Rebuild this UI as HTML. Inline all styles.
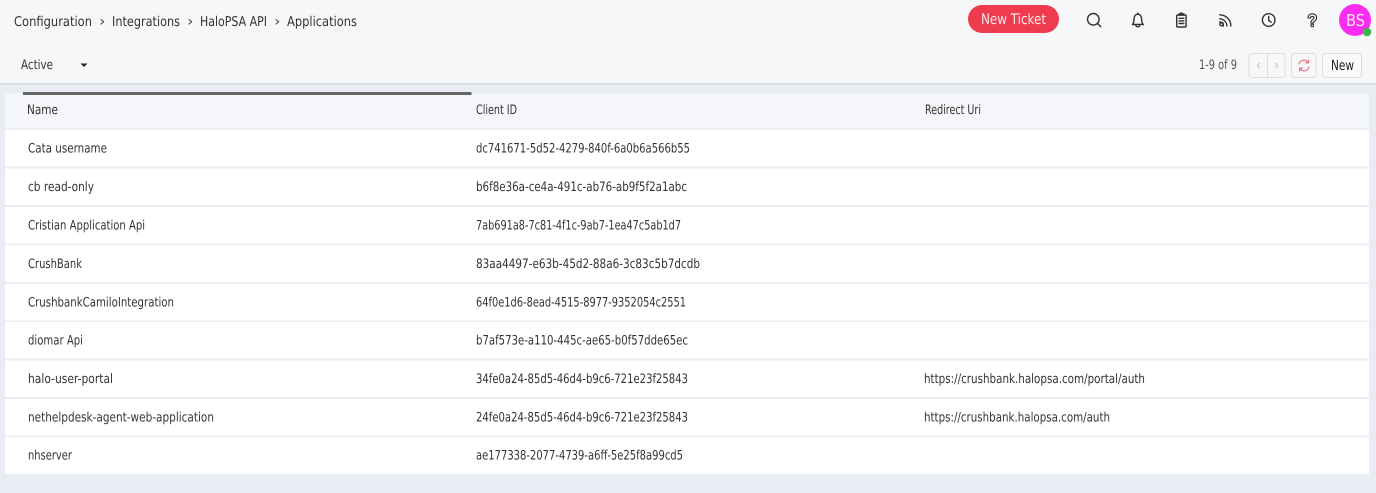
<!DOCTYPE html>
<html><head><meta charset="utf-8"><style>
html,body{margin:0;padding:0;width:1376px;height:493px;overflow:hidden;background:#e9ecf2}
svg{display:block}
text{font-family:"DejaVu Sans",sans-serif;font-size:13px;fill:#333;text-rendering:geometricPrecision}
.h{font-size:13.5px;fill:#333}
.i{fill:none;stroke:#333;stroke-width:1.4;stroke-linecap:round;stroke-linejoin:round}
.c{fill:none;stroke:#444;stroke-width:1;stroke-linecap:round;stroke-linejoin:round}
</style></head><body>
<svg width="1376" height="493" viewBox="0 0 1376 493" xmlns="http://www.w3.org/2000/svg">
<rect width="1376" height="493" fill="#e9ecf2"/>
<rect width="1376" height="84" fill="#f6f7f9"/>
<rect y="42" width="1376" height="1" fill="#f0f1f4"/>
<rect y="83" width="1376" height="2" fill="#dde1e7"/>

<text class="h" x="14" y="26" textLength="78" lengthAdjust="spacingAndGlyphs">Configuration</text>
<path class="c" d="M100.800 19.500l3 2.300-3 2.300"/>
<text class="h" x="112" y="26" textLength="68" lengthAdjust="spacingAndGlyphs">Integrations</text>
<path class="c" d="M188.800 19.500l3 2.300-3 2.300"/>
<text class="h" x="200" y="26" textLength="67" lengthAdjust="spacingAndGlyphs">HaloPSA API</text>
<path class="c" d="M275.800 19.500l3 2.300-3 2.300"/>
<text class="h" x="287" y="26" textLength="70" lengthAdjust="spacingAndGlyphs">Applications</text>

<rect x="968" y="5" width="91" height="28" rx="14" fill="#ee3b4d"/>
<text x="981" y="24" textLength="65" lengthAdjust="spacingAndGlyphs" style="font-size:14.500px;fill:#fbe9ea">New Ticket</text>

<g class="i">
<circle cx="1093.300" cy="19.300" r="5.800"/><path d="M1097.500 23.500l3.300 3.300"/>
<path d="M1132.300 24.500c1.500-1.300 1.700-2.800 1.700-5.500 0-2.800 1.700-4.800 3.800-4.800s3.800 2 3.800 4.800c0 2.700.2 4.200 1.700 5.500z"/><path d="M1135.800 24.800c0 2.800 4 2.800 4 0"/><path d="M1137.800 14v-.8"/>
<rect x="1176.700" y="15" width="9.400" height="12" rx="1"/><path d="M1179 15v-1h1.500v-.8h1.800v.8h1.500v1z" fill="#333"/><path d="M1179 18.300h4.800M1179 20.900h4.800M1179 23.500h4.800"/>
<path d="M1219.700 18.800c3.900 0 7.200 3.300 7.200 7.200M1219.700 14.800c6.200 0 11.200 5 11.200 11.200M1219.700 22c2 0 3.700 1.900 3.700 4" stroke-width="1.400"/>
<circle cx="1221.600" cy="24.200" r="1.700"/>
<circle cx="1268.700" cy="20" r="6.300"/><path d="M1268.700 16.400v4.100l2.500 1.600"/>
<path d="M1308 18c0-2.700 1.900-4.200 4.300-4.200s4.300 1.500 4.300 3.900c0 2.100-1.300 3-2.400 3.800-.6.400-.7.800-.7 1.500h-2.600c0-1.700.4-2.500 1.500-3.300.9-.7 1.700-1.100 1.700-2 0-.8-.8-1.300-1.800-1.300s-1.700.6-1.700 1.600z" stroke-width="1.100"/><rect x="1310.900" y="24.200" width="2.600" height="2.500" rx="1" stroke-width="1.100"/>
</g>

<circle cx="1355" cy="20" r="16" fill="#f92cf0"/>
<text x="1346" y="26" textLength="19" lengthAdjust="spacingAndGlyphs" style="font-size:16.500px;fill:#fde6fb">BS</text>
<circle cx="1367" cy="32" r="4.300" fill="#3cb54a"/>

<text x="21" y="69" textLength="32" lengthAdjust="spacingAndGlyphs">Active</text>
<path d="M80.500 63.500h7l-3.500 3.500z" fill="#222"/>

<text x="1199" y="69" textLength="38" lengthAdjust="spacingAndGlyphs" style="fill:#555">1-9 of 9</text>
<rect x="1249" y="53.500" width="36" height="24" rx="3" fill="#f6f7f9" stroke="#dcdee1"/>
<path d="M1267.500 54v23" stroke="#dcdee1"/>
<path d="M1259.500 63l-2 2.500 2 2.500M1275.500 63l2 2.500-2 2.500" fill="none" stroke="#b5b7ba"/>
<rect x="1291.500" y="53.500" width="24.500" height="24" rx="3" fill="#f6f7f9" stroke="#dcdee1"/>
<g fill="none" stroke="#ef6a78" stroke-width="1.100" stroke-linecap="round" stroke-linejoin="round">
<path d="M1299 64c.5-2.300 2.500-3.800 4.800-3.800 1.600 0 3 .8 3.900 2M1308.500 60v2.800h-2.800"/>
<path d="M1309 67c-.5 2.300-2.500 3.800-4.800 3.800-1.600 0-3-.8-3.900-2M1299.500 71v-2.800h2.800"/>
</g>
<rect x="1322.500" y="53.500" width="39" height="24" rx="3" fill="#f9fafb" stroke="#dcdee1"/>
<text x="1331" y="70" textLength="23" lengthAdjust="spacingAndGlyphs" style="font-size:14px;fill:#222">New</text>

<rect x="5" y="93" width="1364" height="35" fill="#f5f6f9"/>
<rect x="23" y="92" width="448.500" height="3" fill="#666"/>
<text x="27" y="114" textLength="31" lengthAdjust="spacingAndGlyphs">Name</text>
<text x="476" y="114" textLength="41" lengthAdjust="spacingAndGlyphs">Client ID</text>
<text x="925" y="114" textLength="56" lengthAdjust="spacingAndGlyphs">Redirect Uri</text>

<g fill="#fff">
<rect x="5" y="130" width="1364" height="36.500"/>
<rect x="5" y="168.500" width="1364" height="36.500"/>
<rect x="5" y="207" width="1364" height="36.500"/>
<rect x="5" y="245.500" width="1364" height="36.500"/>
<rect x="5" y="284" width="1364" height="36.500"/>
<rect x="5" y="322" width="1364" height="36.500"/>
<rect x="5" y="360.500" width="1364" height="36.500"/>
<rect x="5" y="399" width="1364" height="36.500"/>
<rect x="5" y="437.500" width="1364" height="36.500"/>
</g>

<text x="28" y="152.500" textLength="79" lengthAdjust="spacingAndGlyphs">Cata username</text>
<text x="476" y="152.500" textLength="214" lengthAdjust="spacingAndGlyphs">dc741671-5d52-4279-840f-6a0b6a566b55</text>
<text x="28" y="191" textLength="66" lengthAdjust="spacingAndGlyphs">cb read-only</text>
<text x="476" y="191" textLength="211" lengthAdjust="spacingAndGlyphs">b6f8e36a-ce4a-491c-ab76-ab9f5f2a1abc</text>
<text x="28" y="229.500" textLength="117" lengthAdjust="spacingAndGlyphs">Cristian Application Api</text>
<text x="476" y="229.500" textLength="205" lengthAdjust="spacingAndGlyphs">7ab691a8-7c81-4f1c-9ab7-1ea47c5ab1d7</text>
<text x="28" y="268" textLength="54" lengthAdjust="spacingAndGlyphs">CrushBank</text>
<text x="476" y="268" textLength="224" lengthAdjust="spacingAndGlyphs">83aa4497-e63b-45d2-88a6-3c83c5b7dcdb</text>
<text x="28" y="306.500" textLength="146" lengthAdjust="spacingAndGlyphs">CrushbankCamiloIntegration</text>
<text x="476" y="306.500" textLength="210" lengthAdjust="spacingAndGlyphs">64f0e1d6-8ead-4515-8977-9352054c2551</text>
<text x="28" y="344.500" textLength="55" lengthAdjust="spacingAndGlyphs">diomar Api</text>
<text x="476" y="344.500" textLength="212" lengthAdjust="spacingAndGlyphs">b7af573e-a110-445c-ae65-b0f57dde65ec</text>
<text x="28" y="383" textLength="85" lengthAdjust="spacingAndGlyphs">halo-user-portal</text>
<text x="476" y="383" textLength="212" lengthAdjust="spacingAndGlyphs">34fe0a24-85d5-46d4-b9c6-721e23f25843</text>
<text x="924" y="383" textLength="221" lengthAdjust="spacingAndGlyphs">https://crushbank.halopsa.com/portal/auth</text>
<text x="28" y="421.500" textLength="186" lengthAdjust="spacingAndGlyphs">nethelpdesk-agent-web-application</text>
<text x="476" y="421.500" textLength="212" lengthAdjust="spacingAndGlyphs">24fe0a24-85d5-46d4-b9c6-721e23f25843</text>
<text x="924" y="421.500" textLength="186" lengthAdjust="spacingAndGlyphs">https://crushbank.halopsa.com/auth</text>
<text x="28" y="459.500" textLength="44" lengthAdjust="spacingAndGlyphs">nhserver</text>
<text x="476" y="459.500" textLength="207" lengthAdjust="spacingAndGlyphs">ae177338-2077-4739-a6ff-5e25f8a99cd5</text>
</svg>
</body></html>
